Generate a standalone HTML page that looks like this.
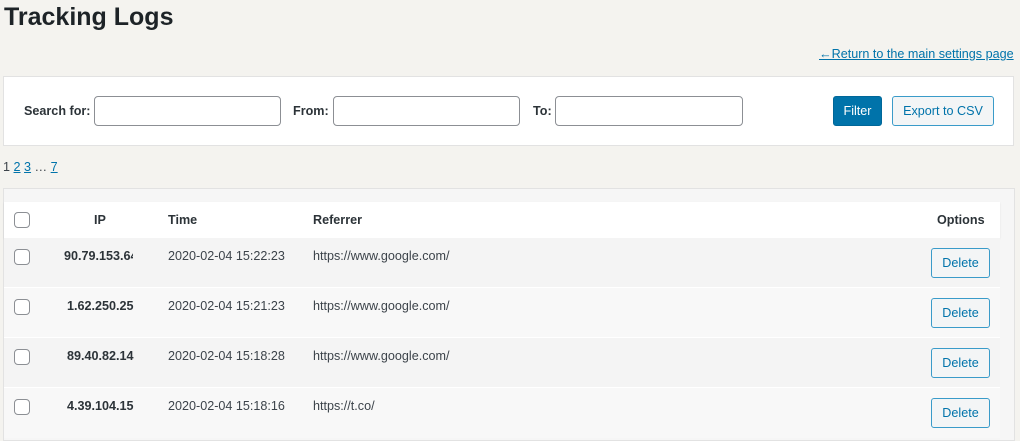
<!DOCTYPE html>
<html><head><meta charset="utf-8"><style>
*{box-sizing:border-box;margin:0;padding:0}
body{width:1020px;height:441px;overflow:hidden;background:#f4f3ef;font-family:"Liberation Sans",Arial,sans-serif;font-size:12.6px;color:#3c434a;position:relative}
.a{position:absolute}
h1{position:absolute;left:4px;top:3px;font-size:25px;font-weight:bold;color:#1d2327}
a{color:#0073aa;text-decoration:underline}
.panel{left:3px;top:76px;width:1011px;height:70px;background:#fff;border:1px solid #e2e2e2}
.lbl{font-weight:bold;color:#2c3338}
.inp{height:30px;border:1px solid #8c8f94;border-radius:4px;background:#fff}
.btn{border-radius:3px;text-align:center;line-height:28px}
.cb{width:16px;height:16px;border:1px solid #8c8f94;border-radius:4px;background:#fff}
.del{width:59px;height:30px;border:1px solid #3a9bc9;border-radius:3px;background:#f3f5f6;color:#0073aa;text-align:center;line-height:28px}
.ip{font-weight:bold;color:#2c3338;width:69px;overflow:hidden;white-space:nowrap}
</style></head><body>
<h1>Tracking Logs</h1>
<a class="a" style="left:819px;top:47px">←Return to the main settings page</a>
<div class="a panel"></div>
<div class="a lbl" style="left:24px;top:104px">Search for:</div>
<div class="a inp" style="left:94px;top:96px;width:187px"></div>
<div class="a lbl" style="left:293px;top:104px">From:</div>
<div class="a inp" style="left:333px;top:96px;width:187px"></div>
<div class="a lbl" style="left:533px;top:104px">To:</div>
<div class="a inp" style="left:555px;top:96px;width:188px"></div>
<div class="a btn" style="left:833px;top:96px;width:49px;height:30px;background:#0073aa;color:#fff;border:1px solid #006799">Filter</div>
<div class="a btn" style="left:892px;top:96px;width:102px;height:30px;background:#f3f5f6;color:#0073aa;border:1px solid #3a9bc9">Export to CSV</div>
<div class="a" style="left:3px;top:160px">1 <a>2</a> <a>3</a> … <a>7</a></div>
<div class="a" style="left:3px;top:188px;width:1012px;height:253px;background:#f6f6f6;border:1px solid #e2e2e2"></div>
<div class="a" style="left:4px;top:202px;width:996px;height:36px;background:#fff;box-shadow:0 1px 2px rgba(0,0,0,.08)"></div>
<div class="a cb" style="left:14px;top:212px"></div>
<div class="a lbl" style="left:94px;top:213px">IP</div>
<div class="a lbl" style="left:168px;top:213px">Time</div>
<div class="a lbl" style="left:313px;top:213px">Referrer</div>
<div class="a lbl" style="left:937px;top:213px">Options</div>

<div class="a" style="left:4px;top:238px;width:996px;height:50px;background:#f4f4f4;border-bottom:1px solid #fff"></div>
<div class="a" style="left:4px;top:288px;width:996px;height:50px;background:#f8f8f8;border-bottom:1px solid #fff"></div>
<div class="a" style="left:4px;top:338px;width:996px;height:50px;background:#f4f4f4;border-bottom:1px solid #fff"></div>
<div class="a" style="left:4px;top:388px;width:996px;height:50px;background:#f8f8f8"></div>

<div class="a cb" style="left:14px;top:249px"></div>
<div class="a ip" style="left:64px;top:249px">90.79.153.64</div>
<div class="a" style="left:168px;top:249px">2020-02-04 15:22:23</div>
<div class="a" style="left:313px;top:249px">https://www.google.com/</div>
<div class="a del" style="left:931px;top:248px">Delete</div>

<div class="a cb" style="left:14px;top:299px"></div>
<div class="a ip" style="left:67px;top:299px">1.62.250.25</div>
<div class="a" style="left:168px;top:299px">2020-02-04 15:21:23</div>
<div class="a" style="left:313px;top:299px">https://www.google.com/</div>
<div class="a del" style="left:931px;top:298px">Delete</div>

<div class="a cb" style="left:14px;top:349px"></div>
<div class="a ip" style="left:67px;top:349px">89.40.82.14</div>
<div class="a" style="left:168px;top:349px">2020-02-04 15:18:28</div>
<div class="a" style="left:313px;top:349px">https://www.google.com/</div>
<div class="a del" style="left:931px;top:348px">Delete</div>

<div class="a cb" style="left:14px;top:399px"></div>
<div class="a ip" style="left:67px;top:399px">4.39.104.15</div>
<div class="a" style="left:168px;top:399px">2020-02-04 15:18:16</div>
<div class="a" style="left:313px;top:399px">https://t.co/</div>
<div class="a del" style="left:931px;top:398px">Delete</div>
</body></html>
